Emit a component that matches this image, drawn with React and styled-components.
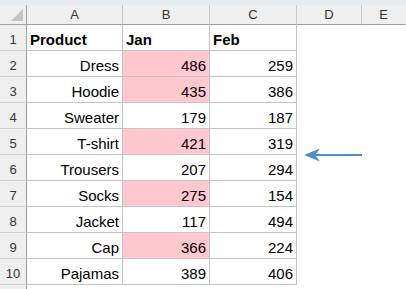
import React from "react";
import styled, { createGlobalStyle } from "styled-components";

const Global = createGlobalStyle`
  html, body { margin: 0; padding: 0; background: #fff; }
  body { font-family: "Liberation Sans", Arial, sans-serif; }
`;

const Sheet = styled.div`
  position: relative;
  width: 406px;
  height: 289px;
  overflow: hidden;
  background: #fff;
  display: grid;
  grid-template-columns: 27px 96px 87px 87px 65px 1fr;
  grid-template-rows: 5px 20px repeat(10, 26px) 1fr;
`;

const TopStrip = styled.div`
  grid-column: 1 / -1;
  background: #e9ecef;
  border-left: ${(p) => (p.$mark ? "0" : "0")};
`;

const Corner = styled.div`
  position: relative;
  background: #efefef;
  border-right: 1px solid #9f9f9f;
  border-bottom: 1px solid #9f9f9f;
  &::after {
    content: "";
    position: absolute;
    right: 3px;
    bottom: 3px;
    width: 0;
    height: 0;
    border-left: 12px solid transparent;
    border-bottom: 12px solid #c4c4c4;
  }
`;

const ColHead = styled.div`
  background: #efefef;
  border-right: 1px solid ${(p) => (p.$last ? "transparent" : "#c8c8c8")};
  border-bottom: 1px solid #9f9f9f;
  display: flex;
  align-items: center;
  justify-content: center;
  font-size: 13px;
  color: #333;
`;

const RowHead = styled.div`
  background: #efefef;
  border-right: 1px solid #9f9f9f;
  border-bottom: 1px solid #d0d0d0;
  display: flex;
  align-items: center;
  justify-content: center;
  padding-top: 3px;
  box-sizing: border-box;
  font-size: 13px;
  color: #333;
`;

const Cell = styled.div`
  background: ${(p) => (p.$hl ? "#ffc7ce" : "#fff")};
  border-right: 1px solid #c4c4c4;
  border-bottom: 1px solid #c4c4c4;
  display: flex;
  align-items: center;
  justify-content: ${(p) => (p.$left ? "flex-start" : "flex-end")};
  padding: 3px 3px 0 3px;
  box-sizing: border-box;
  font-size: 15px;
  font-weight: ${(p) => (p.$bold ? 700 : 400)};
  color: #000;
  white-space: nowrap;
`;

const Blank = styled.div`
  background: #fff;
`;

const BottomStrip = styled.div`
  background: ${(p) => (p.$head ? "#efefef" : "#fff")};
  border-right: ${(p) => (p.$head ? "1px solid #9f9f9f" : "0")};
`;

const Arrow = styled.svg`
  position: absolute;
  left: 304px;
  top: 147px;
`;

const rows = [
  ["Dress", 486, 259, true],
  ["Hoodie", 435, 386, true],
  ["Sweater", 179, 187, false],
  ["T-shirt", 421, 319, true],
  ["Trousers", 207, 294, false],
  ["Socks", 275, 154, true],
  ["Jacket", 117, 494, false],
  ["Cap", 366, 224, true],
  ["Pajamas", 389, 406, false],
];

export default function App() {
  return (
    <>
      <Global />
      <Sheet>
        <TopStrip />
        <Corner />
        <ColHead>A</ColHead>
        <ColHead>B</ColHead>
        <ColHead>C</ColHead>
        <ColHead>D</ColHead>
        <ColHead $last>E</ColHead>

        <RowHead>1</RowHead>
        <Cell $left $bold>Product</Cell>
        <Cell $left $bold>Jan</Cell>
        <Cell $left $bold>Feb</Cell>
        <Blank />
        <Blank />

        {rows.map(([name, jan, feb, hl], i) => (
          <React.Fragment key={name}>
            <RowHead>{i + 2}</RowHead>
            <Cell>{name}</Cell>
            <Cell $hl={hl}>{jan}</Cell>
            <Cell>{feb}</Cell>
            <Blank />
            <Blank />
          </React.Fragment>
        ))}

        <BottomStrip $head />
        <BottomStrip />
        <BottomStrip />
        <BottomStrip />
        <BottomStrip />
        <BottomStrip />

        <Arrow width="60" height="16" viewBox="0 0 60 16">
          <line x1="10" y1="8" x2="58" y2="8" stroke="#4a90c2" strokeWidth="2" />
          <path d="M0 8 L16 1.5 L11 8 L16 14.5 Z" fill="#4a90c2" />
        </Arrow>
      </Sheet>
    </>
  );
}
